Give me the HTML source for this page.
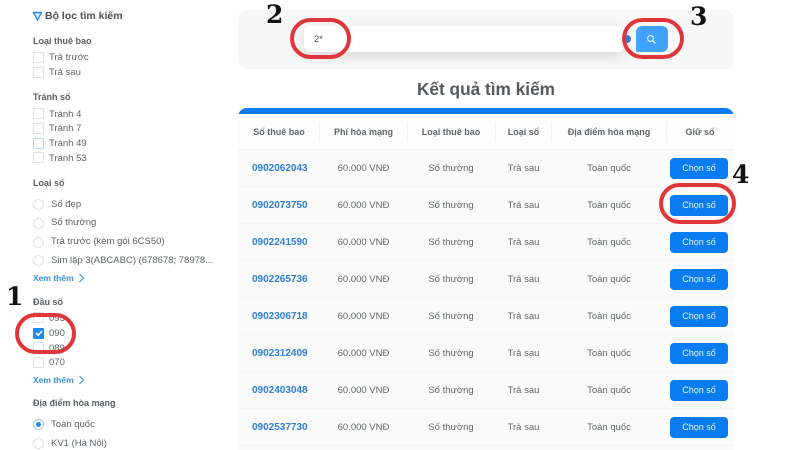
<!DOCTYPE html>
<html lang="vi"><head><meta charset="utf-8"><title>Kết quả tìm kiếm</title>
<style>
html,body{margin:0;padding:0;background:#fff}
#p{position:relative;width:800px;height:450px;overflow:hidden;background:#fff;font-family:"Liberation Sans","DejaVu Sans",sans-serif;color:#555}
#p div,#p span.a{position:absolute}
.t{font-size:9.5px;line-height:12px;white-space:nowrap;color:#5d6366;filter:blur(.25px);margin-top:1px}
.h{font-size:9px;font-weight:bold;line-height:12px;white-space:nowrap;color:#5b6164;filter:blur(.25px)}
.c{width:9px;height:9px;border:1px solid #dfe1e3;border-radius:1px;background:#fff;left:33px}
.r{width:9px;height:9px;border:1px solid #dfe1e3;border-radius:50%;background:#fff;left:33px}
.m{font-size:8.5px;font-weight:bold;color:#3d8ce0;line-height:12px;left:33px;white-space:nowrap;filter:blur(.25px)}
.ch{font-size:9px;font-weight:bold;text-align:center;line-height:12px;color:#5f6568;top:126px;filter:blur(.25px)}
.sep{width:1px;height:20px;top:122px;background:#f1f2f3}
.n{left:252px;width:60px;font-size:10px;font-weight:bold;color:#2f7fd6;line-height:12px;filter:blur(.2px);margin-top:1px}
.d{font-size:9.5px;text-align:center;line-height:12px;color:#62686b;filter:blur(.25px);margin-top:1px}
.b{left:670px;width:58px;height:21px;border-radius:4px;background:#0a7cf2;color:#e8f3ff;font-size:9px;line-height:21px;text-align:center}
.l{left:238px;width:496px;height:1px;background:#f3f4f5}
.num{font-family:"DejaVu Serif","Liberation Serif",serif;font-weight:bold;color:#111;font-size:25px;line-height:30px}
.o{border:4px solid #e0363a;box-sizing:border-box;background:transparent}
</style></head><body><div id="p">

<svg style="position:absolute;left:32px;top:11px" width="11" height="11" viewBox="0 0 11 11"><path d="M1.5 1.5h8L5.5 9.2z" fill="#d6ebfb" stroke="#2b8fe8" stroke-width="1.4" stroke-linejoin="round"/></svg>
<div class="h" style="left:45px;top:10px;font-size:10.5px;line-height:13px;color:#4b5154">Bộ lọc tìm kiếm</div>

<div class="h" style="left:33px;top:35px">Loại thuê bao</div>
<div class="c" style="top:52px"></div><div class="t" style="left:49px;top:51px">Trả trước</div>
<div class="c" style="top:67px"></div><div class="t" style="left:49px;top:66px">Trả sau</div>

<div class="h" style="left:33px;top:91px">Tránh số</div>
<div class="c" style="top:108px"></div><div class="t" style="left:49px;top:108px">Tránh 4</div>
<div class="c" style="top:123px"></div><div class="t" style="left:49px;top:122px">Tránh 7</div>
<div class="c" style="top:138px;border-color:#bcd7ee"></div><div class="t" style="left:49px;top:137px">Tránh 49</div>
<div class="c" style="top:152px"></div><div class="t" style="left:49px;top:152px">Tránh 53</div>

<div class="h" style="left:33px;top:177px">Loại số</div>
<div class="r" style="top:199px"></div><div class="t" style="left:51px;top:198px">Số đẹp</div>
<div class="r" style="top:218px"></div><div class="t" style="left:51px;top:216px">Số thường</div>
<div class="r" style="top:237px"></div><div class="t" style="left:51px;top:235px">Trả trước (kèm gói 6CS50)</div>
<div class="r" style="top:255px"></div><div class="t" style="left:51px;top:254px">Sim lặp 3(ABCABC) (678678; 78978...</div>
<div class="m" style="top:272px">Xem thêm</div>
<svg style="position:absolute;left:78px;top:273px" width="7" height="10" viewBox="0 0 7 10"><path d="M1.5 1l4 4-4 4" fill="none" stroke="#3d8ce0" stroke-width="1.1"/></svg>

<div class="h" style="left:33px;top:296px">Đầu số</div>
<div class="c" style="top:312px"></div><div class="t" style="left:49px;top:312px">095</div>
<div class="c" style="top:328px;background:#1f8af0;border-color:#1f8af0"></div>
<svg style="position:absolute;left:33px;top:327px" width="12" height="12" viewBox="0 0 12 12"><path d="M3 6l2.2 2.2L9.2 4" fill="none" stroke="#fff" stroke-width="1.5"/></svg>
<div class="t" style="left:49px;top:327px">090</div>
<div class="c" style="top:342px"></div><div class="t" style="left:49px;top:342px">089</div>
<div class="c" style="top:357px"></div><div class="t" style="left:49px;top:356px">070</div>
<div class="m" style="top:374px">Xem thêm</div>
<svg style="position:absolute;left:78px;top:375px" width="7" height="10" viewBox="0 0 7 10"><path d="M1.5 1l4 4-4 4" fill="none" stroke="#3d8ce0" stroke-width="1.1"/></svg>

<div class="h" style="left:33px;top:397px">Địa điểm hòa mạng</div>
<div class="r" style="top:419px;border-color:#9ccaf5"></div>
<div style="left:36px;top:422px;width:5px;height:5px;border-radius:50%;background:#1f8af0"></div>
<div class="t" style="left:51px;top:418px">Toàn quốc</div>
<div class="r" style="top:438px"></div><div class="t" style="left:51px;top:437px">KV1 (Hà Nội)</div>

<!-- search panel -->
<div style="left:238px;top:10px;width:496px;height:59px;border-radius:9px;background:#f7f7f8"></div>
<div style="left:304px;top:26px;width:320px;height:26px;border-radius:6px;background:#fff;box-shadow:0 4px 12px rgba(0,0,0,.13)"></div>
<div class="t" style="left:314px;top:33px;color:#555">2*</div>
<div style="left:623px;top:35px;width:8px;height:8px;border-radius:50%;background:#3b73d0"></div>
<div style="left:636px;top:26px;width:32px;height:26px;border-radius:6px 6px 6px 2px;background:#41a3ff"></div>
<svg style="position:absolute;left:645px;top:33px" width="13" height="13" viewBox="0 0 13 13"><circle cx="5.5" cy="5.5" r="2.9" fill="none" stroke="#eaf5ff" stroke-width="1.1"/><path d="M7.8 7.8l2.6 2.6" stroke="#eaf5ff" stroke-width="1.3"/></svg>

<div style="left:238px;top:77px;width:496px;text-align:center;font-size:17.25px;font-weight:bold;line-height:24px;color:#55595c">Kết quả tìm kiếm</div>

<!-- table -->
<div style="left:238px;top:108px;width:496px;height:342px;background:#fafafa;border-radius:9px 9px 0 0;border-top:6px solid #0a7cf2;box-sizing:border-box"></div>
<div style="left:238px;top:114px;width:496px;height:35px;background:#fdfdfd"></div>

<div class="ch" style="left:238px;width:82px">Số thuê bao</div>
<div class="sep" style="left:319px"></div>
<div class="ch" style="left:320px;width:87px">Phí hòa mạng</div>
<div class="sep" style="left:407px"></div>
<div class="ch" style="left:407px;width:88px">Loại thuê bao</div>
<div class="sep" style="left:495px"></div>
<div class="ch" style="left:495px;width:57px">Loại số</div>
<div class="sep" style="left:551px"></div>
<div class="ch" style="left:552px;width:114px">Địa điểm hòa mạng</div>
<div class="sep" style="left:666px"></div>
<div class="ch" style="left:666px;width:68px">Giữ số</div>

<div class="l" style="top:149px"></div>
<div class="l" style="top:186px"></div>
<div class="l" style="top:223px"></div>
<div class="l" style="top:260px"></div>
<div class="l" style="top:297px"></div>
<div class="l" style="top:334px"></div>
<div class="l" style="top:371px"></div>
<div class="l" style="top:408px"></div>
<div class="l" style="top:445px"></div>

<div class="n" style="top:162px">0902062043</div><div class="d" style="left:320px;width:87px;top:162px">60.000 VNĐ</div><div class="d" style="left:407px;width:88px;top:162px">Số thường</div><div class="d" style="left:495px;width:57px;top:162px">Trả sau</div><div class="d" style="left:552px;width:114px;top:162px">Toàn quốc</div><div class="b" style="top:158px">Chọn số</div>
<div class="n" style="top:199px">0902073750</div><div class="d" style="left:320px;width:87px;top:199px">60.000 VNĐ</div><div class="d" style="left:407px;width:88px;top:199px">Số thường</div><div class="d" style="left:495px;width:57px;top:199px">Trả sau</div><div class="d" style="left:552px;width:114px;top:199px">Toàn quốc</div><div class="b" style="top:195px">Chọn số</div>
<div class="n" style="top:236px">0902241590</div><div class="d" style="left:320px;width:87px;top:236px">60.000 VNĐ</div><div class="d" style="left:407px;width:88px;top:236px">Số thường</div><div class="d" style="left:495px;width:57px;top:236px">Trả sau</div><div class="d" style="left:552px;width:114px;top:236px">Toàn quốc</div><div class="b" style="top:232px">Chọn số</div>
<div class="n" style="top:273px">0902265736</div><div class="d" style="left:320px;width:87px;top:273px">60.000 VNĐ</div><div class="d" style="left:407px;width:88px;top:273px">Số thường</div><div class="d" style="left:495px;width:57px;top:273px">Trả sau</div><div class="d" style="left:552px;width:114px;top:273px">Toàn quốc</div><div class="b" style="top:269px">Chọn số</div>
<div class="n" style="top:310px">0902306718</div><div class="d" style="left:320px;width:87px;top:310px">60.000 VNĐ</div><div class="d" style="left:407px;width:88px;top:310px">Số thường</div><div class="d" style="left:495px;width:57px;top:310px">Trả sau</div><div class="d" style="left:552px;width:114px;top:310px">Toàn quốc</div><div class="b" style="top:306px">Chọn số</div>
<div class="n" style="top:347px">0902312409</div><div class="d" style="left:320px;width:87px;top:347px">60.000 VNĐ</div><div class="d" style="left:407px;width:88px;top:347px">Số thường</div><div class="d" style="left:495px;width:57px;top:347px">Trả sau</div><div class="d" style="left:552px;width:114px;top:347px">Toàn quốc</div><div class="b" style="top:343px">Chọn số</div>
<div class="n" style="top:384px">0902403048</div><div class="d" style="left:320px;width:87px;top:384px">60.000 VNĐ</div><div class="d" style="left:407px;width:88px;top:384px">Số thường</div><div class="d" style="left:495px;width:57px;top:384px">Trả sau</div><div class="d" style="left:552px;width:114px;top:384px">Toàn quốc</div><div class="b" style="top:380px">Chọn số</div>
<div class="n" style="top:421px">0902537730</div><div class="d" style="left:320px;width:87px;top:421px">60.000 VNĐ</div><div class="d" style="left:407px;width:88px;top:421px">Số thường</div><div class="d" style="left:495px;width:57px;top:421px">Trả sau</div><div class="d" style="left:552px;width:114px;top:421px">Toàn quốc</div><div class="b" style="top:417px">Chọn số</div>

<!-- annotations -->
<div class="o" style="left:15px;top:313px;width:61px;height:41px;border-radius:21px"></div>
<div class="o" style="left:290px;top:18px;width:61px;height:41px;border-radius:21px"></div>
<div class="o" style="left:622px;top:18px;width:62px;height:41px;border-radius:21px"></div>
<div class="o" style="left:659px;top:183px;width:77px;height:41px;border-radius:21px"></div>
<div class="num" style="left:6px;top:282px">1</div>
<div class="num" style="left:266px;top:0">2</div>
<div class="num" style="left:690px;top:2px">3</div>
<div class="num" style="left:732px;top:160px">4</div>
</div></body></html>
